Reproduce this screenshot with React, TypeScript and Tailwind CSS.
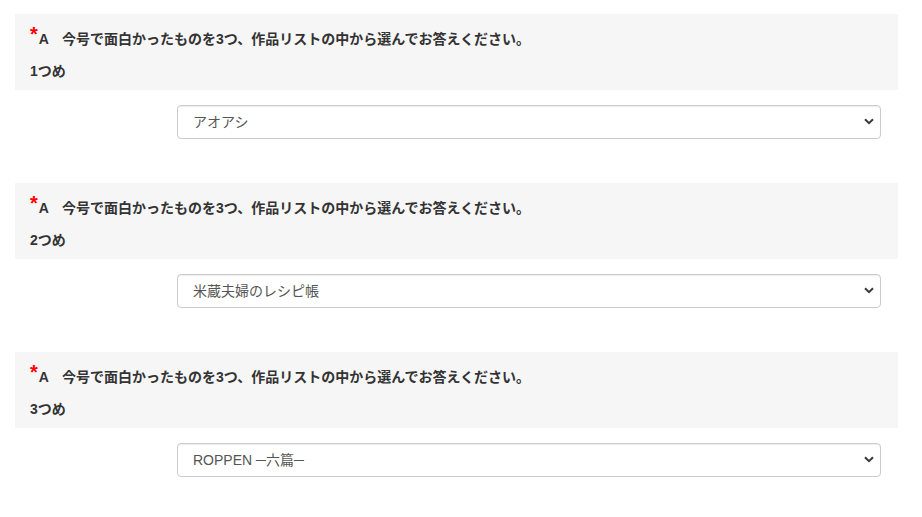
import React from "react";

const items = [
  { n: "1つめ", v: "アオアシ" },
  { n: "2つめ", v: "米蔵夫婦のレシピ帳" },
  { n: "3つめ", v: "ROPPEN ─六篇─" },
];

function Chevron() {
  return (
    <svg
      className="pointer-events-none absolute right-[7px] top-[13px]"
      width="10"
      height="7"
      viewBox="0 0 10 7"
    >
      <path d="M1 1.2 L5 5.2 L9 1.2" fill="none" stroke="#3a3a3a" strokeWidth="2" />
    </svg>
  );
}

export default function App() {
  return (
    <div
      className="w-[922px] bg-white pt-[14px] text-[#333]"
      style={{ fontFamily: '"Liberation Sans", "Noto Sans CJK JP", sans-serif' }}
    >
      <div className="ml-[15px] w-[883px]">
        {items.map((it, i) => (
          <div key={i} className="mb-[44px]">
            <div className="h-[76px] bg-[#f6f6f6] px-[15px] pt-[15px]">
              <div className="flex items-start text-[14px] font-bold leading-[20px]">
                <span className="mt-[-5px] mr-[1px] text-[20px] font-bold leading-[20px] text-[#ff0000]">*</span>
                <span>A</span>
                <span className="ml-[13px]">今号で面白かったものを3つ、作品リストの中から選んでお答えください。</span>
              </div>
              <div className="mt-[12px] text-[14px] font-bold leading-[20px]">{it.n}</div>
            </div>
            <div className="pl-[162px] pr-[17px] pt-[15px]">
              <div className="relative">
                <select
                  defaultValue={it.v}
                  className="h-[34px] w-full appearance-none rounded-[4px] border border-[#ccc] bg-white pl-[15px] pr-[24px] text-[14px] text-[#555] shadow-[inset_0_1px_1px_rgba(0,0,0,0.075)] outline-none"
                  style={{ fontFamily: '"Liberation Sans", "Noto Sans CJK JP", sans-serif' }}
                >
                  <option value={it.v}>{it.v}</option>
                </select>
                <Chevron />
              </div>
            </div>
          </div>
        ))}
      </div>
    </div>
  );
}
